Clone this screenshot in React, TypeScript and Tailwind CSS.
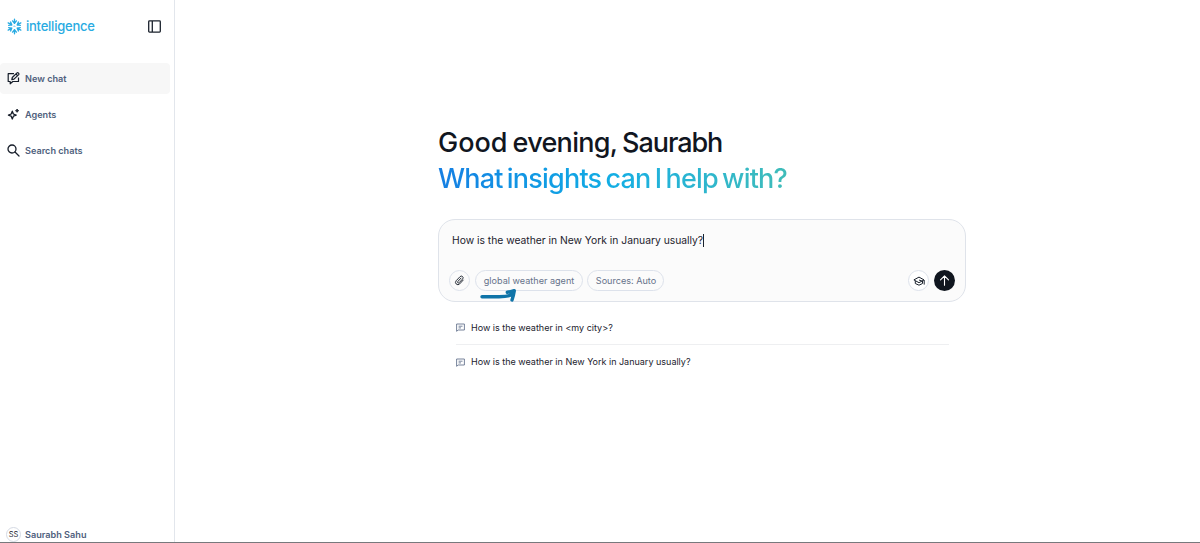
import type { ReactNode } from 'react'

const prompts = [
  'How is the weather in <my city>?',
  'How is the weather in New York in January usually?',
]

const arms = [0, 60, 120, 180, 240, 300]

function SnowflakeLogo() {
  return (
    <svg className="h-[17px] w-[17px]" viewBox="0 0 17 17" fill="none" stroke="#29abe2" strokeWidth="1.35" strokeLinecap="round" strokeLinejoin="round">
      {arms.map((angle) => (
        <path key={angle} d="M8.5 1.2v4.2M6.6 2.9l1.9 2.5 1.9-2.5" transform={`rotate(${angle} 8.5 8.5)`} />
      ))}
      <path d="m8.5 8 .5.5-.5.5-.5-.5z" strokeWidth=".6" />
    </svg>
  )
}

function PanelIcon() {
  return (
    <svg className="h-[13px] w-[13px]" viewBox="0 0 13 13" fill="none" stroke="#1b222d" strokeWidth="1.3">
      <rect x=".7" y=".9" width="11.6" height="11.2" rx=".8" />
      <path d="M4.3 1v11" />
    </svg>
  )
}

function NewChatIcon() {
  return (
    <svg className="h-[13px] w-[13px]" viewBox="0 0 13 13" fill="none" stroke="#161d29" strokeWidth="1.2" strokeLinejoin="round">
      <path d="M7 1.7H1.2v7.8h2v2.3l2.6-2.3h5.7V5.5" />
      <path d="m4.8 7.6.5-2.1L10 .9q.8-.5 1.5.2t.2 1.5L7 7.1z" />
      <path d="m9 2 1.6 1.6" />
    </svg>
  )
}

function AgentsIcon() {
  return (
    <svg className="h-[13px] w-[13px]" viewBox="0 0 13 13" fill="none" stroke="#161d29" strokeWidth="1.3" strokeLinejoin="round">
      <path d="M5.3 3.2 6.4 6l2.8 1.1-2.8 1.1-1.1 2.8-1.1-2.8-2.8-1.1L4.2 6z" />
      <path d="m10.1 1.1.5 1.1 1.1.5-1.1.5-.5 1.1-.5-1.1-1.1-.5 1.1-.5z" fill="#161d29" strokeWidth=".9" />
    </svg>
  )
}

function SearchIcon() {
  return (
    <svg className="h-[13px] w-[13px]" viewBox="0 0 13 13" fill="none" stroke="#161d29" strokeWidth="1.3" strokeLinecap="round">
      <circle cx="5" cy="5" r="4" />
      <path d="m8 8 4 4" />
    </svg>
  )
}

function ClipIcon() {
  return (
    <svg className="h-[11px] w-[11px]" viewBox="0 0 11 11" fill="none" stroke="#1b222d" strokeWidth=".95" strokeLinecap="round">
      <path d="M9.2 5.1 5.7 8.9Q4 10.6 2.3 9.1T2.2 5.7l3.9-4.1q1.2-1.1 2.4-.1t.2 2.4L5.1 7.7q-.7.6-1.3.1t0-1.3l3.2-3.4" />
    </svg>
  )
}

function CapIcon() {
  return (
    <svg className="h-[12px] w-[12px]" viewBox="0 0 12 12" fill="none" stroke="#1b222d" strokeWidth="1" strokeLinejoin="round">
      <path d="M.9 4.9 6 2.1l5 2.8-5 2.8zM2.3 6v2.5L6 10.2l3.5-1.7V6M6 5l3.6 1.3M11.2 5v4.6" />
    </svg>
  )
}

function ArrowUpIcon() {
  return (
    <svg className="h-[11px] w-[11px]" viewBox="0 0 11 11" fill="none" stroke="#fff" strokeWidth="1.1" strokeLinecap="round" strokeLinejoin="round">
      <path d="M5.5 10.3V.8M1.5 4.8l4-4 4 4" />
    </svg>
  )
}

function MessageIcon() {
  return (
    <svg className="h-[9px] w-[9px] shrink-0" viewBox="0 0 9 9" fill="none" stroke="#66758f" strokeWidth=".9" strokeLinejoin="round">
      <path d="M.6 8.3V1h7.8v6H2.2zM2.6 3.2h3.9M2.6 4.9h2.4" />
    </svg>
  )
}

function NavItem({ icon, label, active }: { icon: ReactNode; label: string; active?: boolean }) {
  return (
    <button
      className={`flex h-[31px] w-[170px] items-center gap-[5px] rounded-[4px] pl-[7px] text-[9.15px] font-semibold text-[#505f7d] ${
        active ? 'bg-[#f7f7f7]' : ''
      }`}
    >
      {icon}
      <span>{label}</span>
    </button>
  )
}

export default function App() {
  return (
    <div className="flex h-[543px] w-[1200px] overflow-hidden border-b border-[#77797c] bg-white font-['Inter',sans-serif]">
      {/* Sidebar */}
      <aside className="flex w-[175px] shrink-0 flex-col border-r border-[#e2e6ec]">
        <div className="flex h-[53px] items-center pl-[6px] pr-[13px]">
          <SnowflakeLogo />
          <span className="ml-[3px] text-[13px] font-medium tracking-[-0.24px] text-[#29abe2]">intelligence</span>
          <button className="ml-auto">
            <PanelIcon />
          </button>
        </div>
        <nav className="mt-[10px] flex flex-col gap-[5px]">
          <NavItem icon={<NewChatIcon />} label="New chat" active />
          <NavItem icon={<AgentsIcon />} label="Agents" />
          <NavItem icon={<SearchIcon />} label="Search chats" />
        </nav>
        <div className="mt-auto flex h-[15px] items-center gap-[4px] pl-[6px]">
          <span className="flex h-[15px] w-[15px] items-center justify-center rounded-full border border-[#d5dae4] text-[7.5px] text-[#1b222d]">
            SS
          </span>
          <span className="text-[9.15px] font-semibold text-[#505f7d]">Saurabh Sahu</span>
        </div>
      </aside>

      {/* Chat start screen */}
      <main className="flex w-[791px] flex-col pl-[263px] pt-[125px]">
        <h1 className="flex flex-col items-start whitespace-nowrap text-[27px] font-medium leading-[36px]">
          <span className="tracking-[-0.7px] text-[#11161f] [word-spacing:-1.5px]">
            <span className="tracking-[0px]">Good</span> evening, <span className="tracking-[-1.05px]">Saurabh</span>
          </span>
          <span className="bg-gradient-to-r from-[#167fe3] via-[#13aee4] to-[#3fbcb9] bg-clip-text tracking-[-0.8px] text-transparent [word-spacing:-2.2px]">
            What insights can I help with?
          </span>
        </h1>

        <div className="mt-[22px] flex h-[83px] w-[528px] flex-col rounded-[17px] border border-[#dfe3ea] bg-[#fbfbfb] pb-[10px] pl-[11px] pr-[10px] pt-[13px]">
          <div className="flex items-center pl-[2px] text-[10.3px] leading-[14px] text-[#1b222d]">
            <span className="whitespace-nowrap">How is the weather in New York in January usually?</span>
            <span className="h-[13px] w-px bg-[#1b222d]" />
          </div>
          <div className="mt-auto flex items-center text-[9.1px] text-[#66728a]">
            <button className="-ml-px flex h-[21px] w-[21px] items-center justify-center rounded-full border border-[#dde2eb]">
              <ClipIcon />
            </button>
            <button className="relative ml-[5px] flex h-[21px] w-[108px] items-center justify-center rounded-full border border-[#dde2eb]">
              <span className="whitespace-nowrap">global weather agent</span>
              {/* Hand-drawn marker under the agent name */}
              <svg className="absolute left-[3px] top-[17px] h-[15px] w-[40px]" viewBox="0 0 40 15" fill="none" stroke="#0f74a8" strokeWidth="3.4" strokeLinecap="round" strokeLinejoin="round">
                <path d="M3 8.7h17q8-.1 12.5-1.7M28.3 4.2q4-.5 7-1.5-.8 5-2.3 9.3M34.5 3.5 31 7.3" />
              </svg>
            </button>
            <button className="ml-[4px] flex h-[21px] w-[77px] items-center justify-center whitespace-nowrap rounded-full border border-[#dde2eb] pl-px">
              Sources: Auto
            </button>
            <button className="ml-auto flex h-[21px] w-[21px] items-center justify-center rounded-full border border-[#dde2eb] bg-white">
              <CapIcon />
            </button>
            <button className="ml-[5px] flex h-[21px] w-[21px] items-center justify-center rounded-full bg-[#10161f]">
              <ArrowUpIcon />
            </button>
          </div>
        </div>

        <ul className="ml-[18px] mt-[9px] flex w-[493px] flex-col">
          {prompts.map((prompt, index) => (
            <li
              key={prompt}
              className={`flex h-[34px] items-center gap-[6px] text-[9px] text-[#1b222d] ${
                index === 0 ? 'border-b border-[#eeeff1]' : ''
              }`}
            >
              <MessageIcon />
              <span>{prompt}</span>
            </li>
          ))}
        </ul>
      </main>
    </div>
  )
}
